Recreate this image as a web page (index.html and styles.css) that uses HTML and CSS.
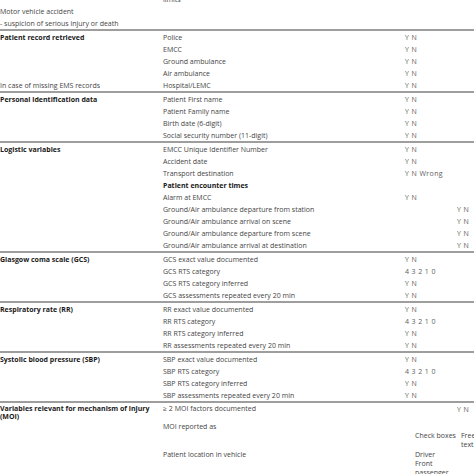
FILE: index.html
```html
<!DOCTYPE html>
<html>
<head>
<meta charset="utf-8">
<link rel="stylesheet" href="styles.css">
</head>
<body>
<table class="vars">
<colgroup><col class="c-group"><col class="c-var"><col class="c-val"><col class="c-extra"></colgroup>
<tbody>
<tr><td></td><td>limits</td><td></td><td></td></tr>
<tr><td>Motor vehicle accident</td><td></td><td></td><td></td></tr>
<tr><td>- suspicion of serious injury or death</td><td></td><td></td><td></td></tr>

<tr class="start"><td class="grp">Patient record retrieved</td><td>Police</td><td class="yn">Y N</td><td></td></tr>
<tr><td></td><td>EMCC</td><td class="yn">Y N</td><td></td></tr>
<tr><td></td><td>Ground ambulance</td><td class="yn">Y N</td><td></td></tr>
<tr><td></td><td>Air ambulance</td><td class="yn">Y N</td><td></td></tr>
<tr><td>In case of missing EMS records</td><td>Hospital/LEMC</td><td class="yn">Y N</td><td></td></tr>

<tr class="start"><td class="grp">Personal identification data</td><td>Patient First name</td><td class="yn">Y N</td><td></td></tr>
<tr><td></td><td>Patient Family name</td><td class="yn">Y N</td><td></td></tr>
<tr><td></td><td>Birth date (6-digit)</td><td class="yn">Y N</td><td></td></tr>
<tr><td></td><td>Social security number (11-digit)</td><td class="yn">Y N</td><td></td></tr>

<tr class="start"><td class="grp">Logistic variables</td><td>EMCC Unique Identifier Number</td><td class="yn">Y N</td><td></td></tr>
<tr><td></td><td>Accident date</td><td class="yn">Y N</td><td></td></tr>
<tr><td></td><td>Transport destination</td><td class="yn">Y N Wrong</td><td></td></tr>
<tr><td></td><td class="grp">Patient encounter times</td><td></td><td></td></tr>
<tr><td></td><td>Alarm at EMCC</td><td class="yn">Y N</td><td></td></tr>
<tr><td></td><td>Ground/Air ambulance departure from station</td><td></td><td class="yn">Y N</td></tr>
<tr><td></td><td>Ground/Air ambulance arrival on scene</td><td></td><td class="yn">Y N</td></tr>
<tr><td></td><td>Ground/Air ambulance departure from scene</td><td></td><td class="yn">Y N</td></tr>
<tr><td></td><td>Ground/Air ambulance arrival at destination</td><td></td><td class="yn">Y N</td></tr>

<tr class="start"><td class="grp">Glasgow coma scale (GCS)</td><td>GCS exact value documented</td><td class="yn">Y N</td><td></td></tr>
<tr><td></td><td>GCS RTS category</td><td class="yn">4 3 2 1 0</td><td></td></tr>
<tr><td></td><td>GCS RTS category inferred</td><td class="yn">Y N</td><td></td></tr>
<tr><td></td><td>GCS assessments repeated every 20 min</td><td class="yn">Y N</td><td></td></tr>

<tr class="start"><td class="grp">Respiratory rate (RR)</td><td>RR exact value documented</td><td class="yn">Y N</td><td></td></tr>
<tr><td></td><td>RR RTS category</td><td class="yn">4 3 2 1 0</td><td></td></tr>
<tr><td></td><td>RR RTS category inferred</td><td class="yn">Y N</td><td></td></tr>
<tr><td></td><td>RR assessments repeated every 20 min</td><td class="yn">Y N</td><td></td></tr>

<tr class="start"><td class="grp">Systolic blood pressure (SBP)</td><td>SBP exact value documented</td><td class="yn">Y N</td><td></td></tr>
<tr><td></td><td>SBP RTS category</td><td class="yn">4 3 2 1 0</td><td></td></tr>
<tr><td></td><td>SBP RTS category inferred</td><td class="yn">Y N</td><td></td></tr>
<tr><td></td><td>SBP assessments repeated every 20 min</td><td class="yn">Y N</td><td></td></tr>

<tr class="start moi"><td class="grp">Variables relevant for mechanism of injury<br>(MOI)</td><td>&ge; 2 MOI factors documented</td><td></td><td class="yn">Y N</td></tr>
<tr class="reported"><td></td><td>MOI reported as</td><td class="opt lower nowrap">Check boxes</td><td class="lower free">Free<br>text</td></tr>
<tr><td></td><td>Patient location in vehicle</td><td class="opt"><div>Driver</div><div>Front passenger</div></td><td></td></tr>
</tbody>
</table>
</body>
</html>
```

FILE: styles.css
```css
html, body {
  margin: 0;
  padding: 0;
  background: #ffffff;
  overflow: hidden;
}

.vars {
  margin-top: -7px;
  width: 520px;
  table-layout: fixed;
  border-collapse: separate;
  border-spacing: 0;
  font-family: "Open Sans", "Noto Sans", sans-serif;
  font-size: 7px;
  line-height: 9px;
  color: #454545;
}

.c-group { width: 163px; }
.c-var { width: 242px; }
.c-val { width: 52px; }
.c-extra { width: 63px; }

.vars td {
  padding: 1.5px 0;
  vertical-align: top;
}

.vars tr.start td {
  border-top: 2px solid #9e9e9e;
}

.vars td.grp {
  font-weight: 700;
  color: #1a1a1a;
}

.vars td.yn {
  color: #5e5e5e;
  letter-spacing: 0.4px;
}

.vars tr.moi td {
  line-height: 8px;
}

.vars tr.moi td.yn {
  line-height: 9px;
}

.vars tr.reported td {
  padding-top: 0;
  padding-bottom: 0;
}

.vars tr.reported td.lower {
  padding-top: 8.5px;
}

.vars td.opt {
  padding-left: 10px;
}

.vars td.nowrap {
  white-space: nowrap;
}

.vars td.free {
  padding-left: 4px;
}
```
